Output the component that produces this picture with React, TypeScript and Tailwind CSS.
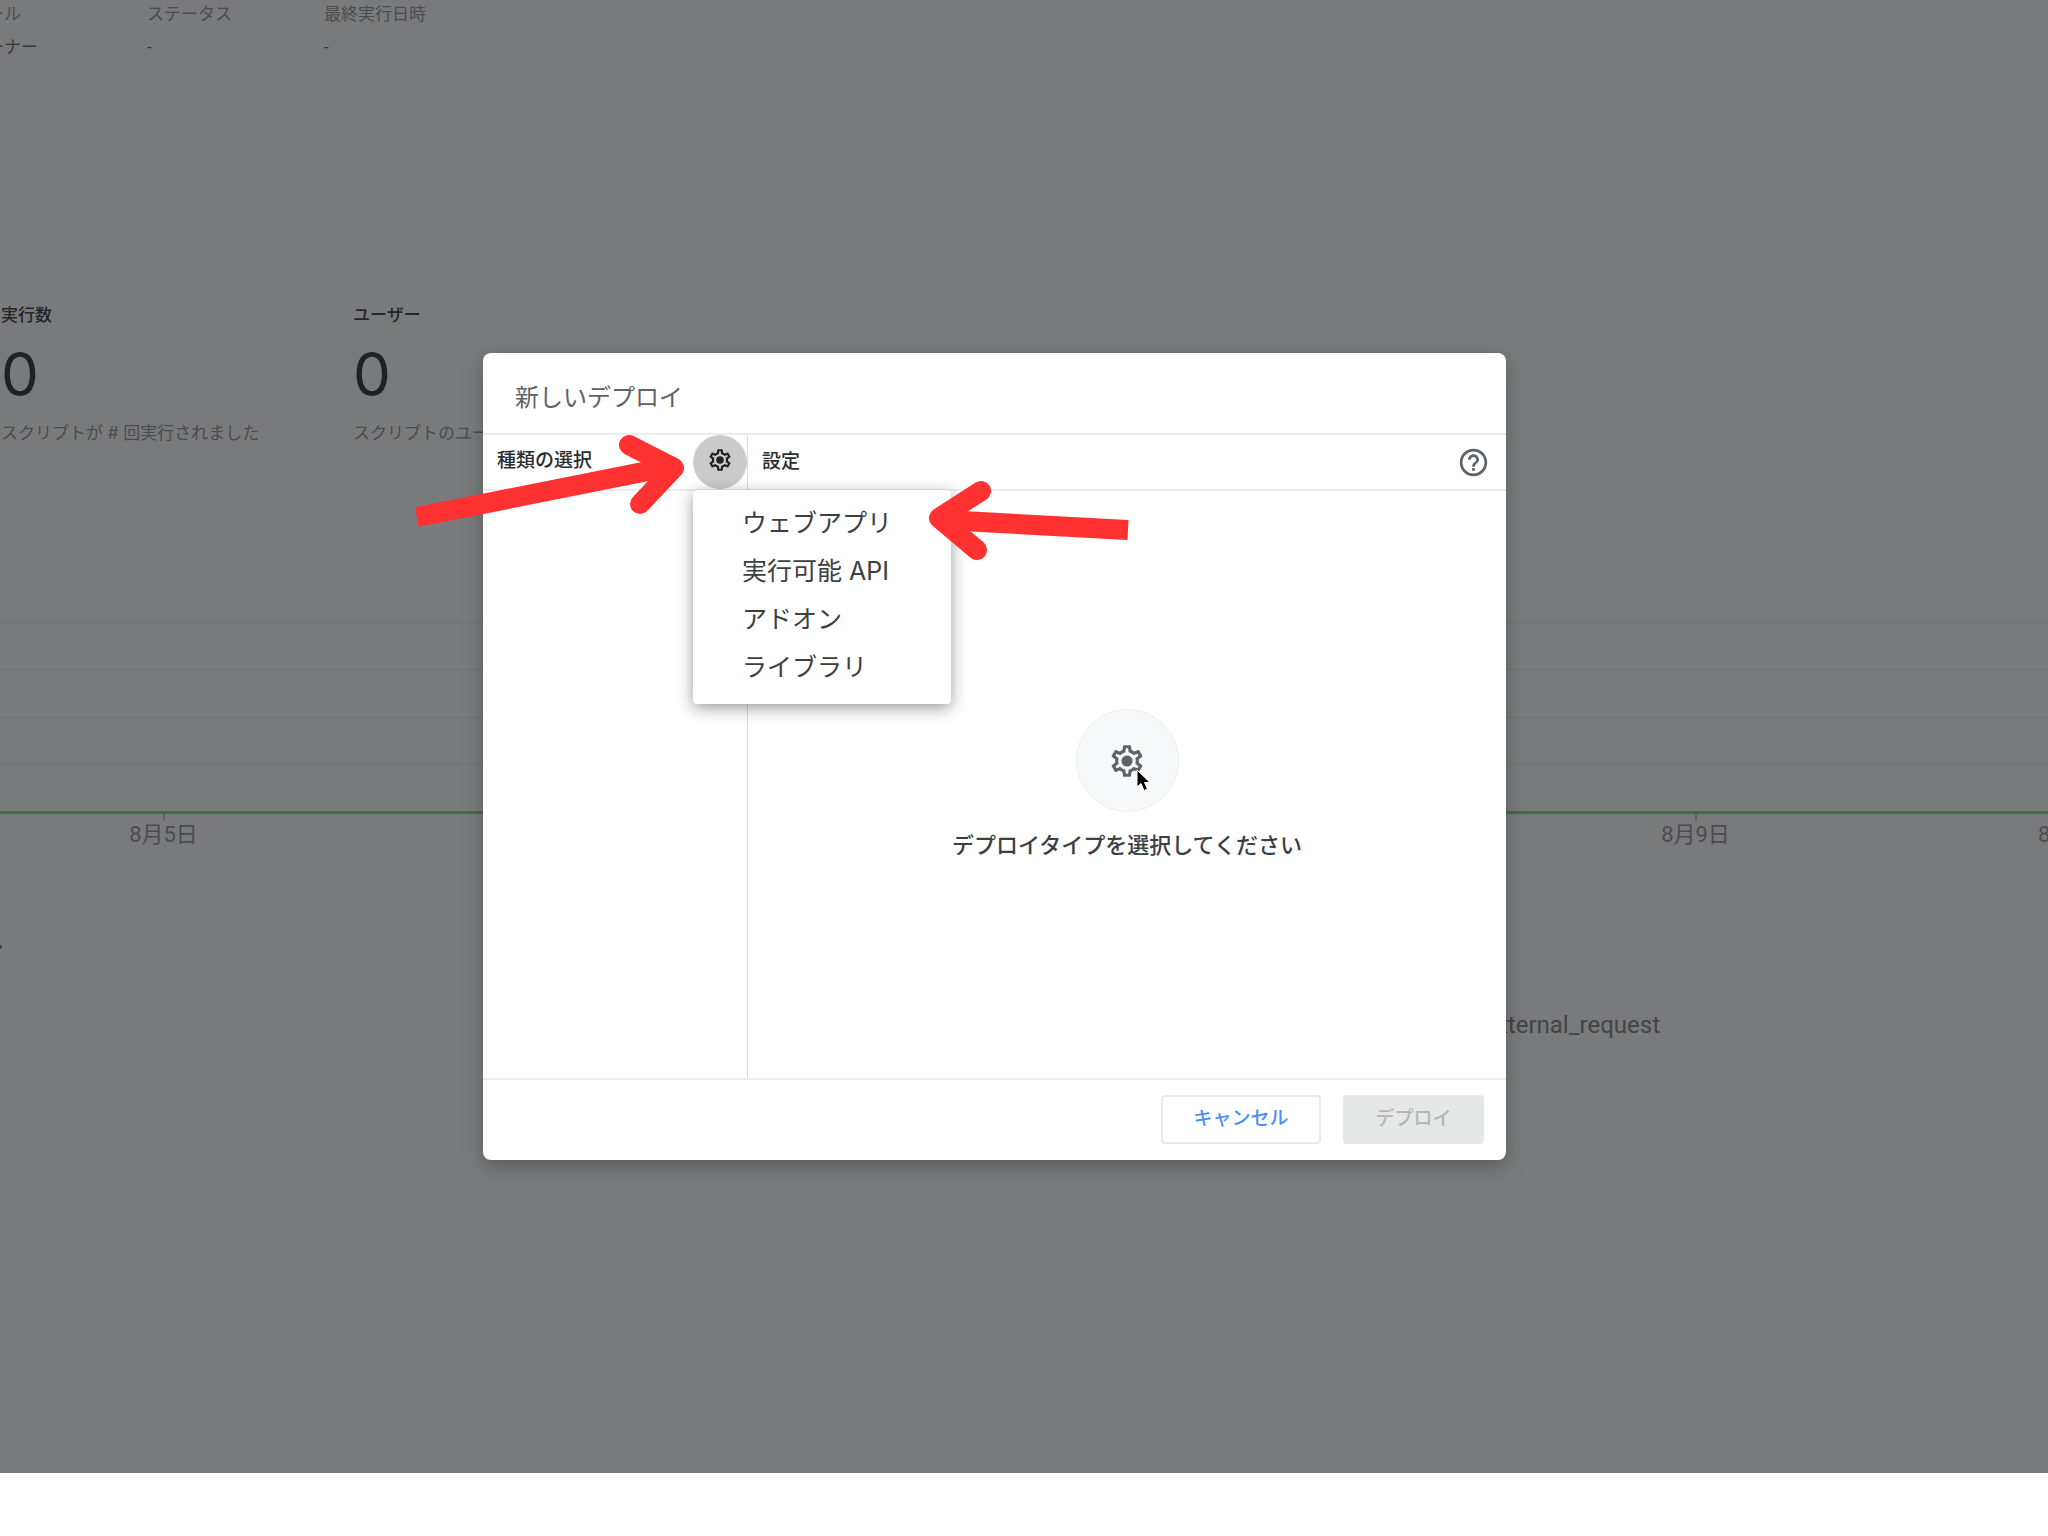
const ticks = ["8月5日", "", "", "", "8月9日", "8月10日"];

const stats = [
  { title: "実行数", value: "0", note: "スクリプトが # 回実行されました" },
  { title: "ユーザー", value: "0", note: "スクリプトのユーザー数" },
];

const details = [
  { term: "ロール", value: "オーナー" },
  { term: "ステータス", value: "-" },
  { term: "最終実行日時", value: "-" },
];

const deployTypes = ["ウェブアプリ", "実行可能 API", "アドオン", "ライブラリ"];

function GearIcon({ className }: { className?: string }) {
  return (
    <svg viewBox="0 0 24 24" className={className} fill="currentColor" aria-hidden="true">
      <path
        fillRule="evenodd"
        d="M19.43 12.98c.04-.32.07-.64.07-.98 0-.34-.03-.66-.07-.98l2.11-1.65c.19-.15.24-.42.12-.64l-2-3.46c-.09-.16-.26-.25-.44-.25-.06 0-.12.01-.17.03l-2.49 1c-.52-.4-1.08-.73-1.69-.98l-.38-2.65C14.46 2.18 14.25 2 14 2h-4c-.25 0-.46.18-.49.42l-.38 2.65c-.61.25-1.17.59-1.69.98l-2.49-1c-.06-.02-.12-.03-.18-.03-.17 0-.34.09-.43.25l-2 3.46c-.13.22-.07.49.12.64l2.11 1.65c-.04.32-.07.65-.07.98 0 .33.03.66.07.98l-2.11 1.65c-.19.15-.24.42-.12.64l2 3.46c.09.16.26.25.44.25.06 0 .12-.01.17-.03l2.49-1c.52.4 1.08.73 1.69.98l.38 2.65c.03.24.24.42.49.42h4c.25 0 .46-.18.49-.42l.38-2.65c.61-.25 1.17-.59 1.69-.98l2.49 1c.06.02.12.03.18.03.17 0 .34-.09.43-.25l2-3.46c.12-.22.07-.49-.12-.64l-2.11-1.65zm-1.98-1.71c.04.31.05.52.05.73 0 .21-.02.43-.05.73l-.14 1.13.89.7 1.08.84-.7 1.21-1.27-.51-1.04-.42-.9.68c-.43.32-.84.56-1.25.73l-1.06.43-.16 1.13-.2 1.35h-1.4l-.19-1.35-.16-1.13-1.06-.43c-.43-.18-.83-.41-1.23-.71l-.91-.7-1.06.43-1.27.51-.7-1.21 1.08-.84.89-.7-.14-1.13c-.03-.31-.05-.54-.05-.74s.02-.43.05-.73l.14-1.13-.89-.7-1.08-.84.7-1.21 1.27.51 1.04.42.9-.68c.43-.32.84-.56 1.25-.73l1.06-.43.16-1.13.2-1.35h1.39l.19 1.35.16 1.13 1.06.43c.43.18.83.41 1.23.71l.91.7 1.06-.43 1.27-.51.7 1.21-1.07.85-.89.7.14 1.13z"
      />
      <circle cx="12" cy="12" r="3.5" />
    </svg>
  );
}

function HelpIcon({ className }: { className?: string }) {
  return (
    <svg viewBox="0 0 24 24" className={className} fill="currentColor" aria-hidden="true">
      <path d="M11 18h2v-2h-2v2zm1-16C6.48 2 2 6.48 2 12s4.48 10 10 10 10-4.48 10-10S17.52 2 12 2zm0 18c-4.41 0-8-3.59-8-8s3.59-8 8-8 8 3.59 8 8-3.59 8-8 8zm0-14c-2.21 0-4 1.79-4 4h2c0-1.1.9-2 2-2s2 .9 2 2c0 2-3 1.75-3 5h2c0-2.25 3-2.5 3-5 0-2.21-1.79-4-4-4z" />
    </svg>
  );
}

function Dashboard() {
  return (
    <main className="text-[17px] leading-6 text-[#4b4c4f]">
      <dl className="-ml-[30px] flex pt-0.5">
        {details.map((d) => (
          <div key={d.term} className="flex w-[177px] flex-col gap-[9px]">
            <dt>{d.term}</dt>
            <dd className="text-[#36373a]">{d.value}</dd>
          </div>
        ))}
      </dl>

      <section className="mt-[244px] flex pl-px">
        {stats.map((s) => (
          <div key={s.title} className="w-[352px]">
            <h2 className="font-medium text-[#242528]">{s.title}</h2>
            <p className="my-[15px] font-[Inter] text-[60px] leading-[64px] text-[#202124]">
              {s.value}
            </p>
            <p className="whitespace-nowrap font-['Inter','Noto_Sans_CJK_JP',sans-serif]">{s.note}</p>
          </div>
        ))}
      </section>

      <section className="mt-[177px]">
        <div className="flex h-[189px] flex-col">
          <div className="flex-1 border-t border-[#717274]" />
          <div className="flex-1 border-t border-[#717274]" />
          <div className="flex-1 border-t border-[#717274]" />
          <div className="flex-1 border-t border-[#717274]" />
        </div>
        <div className="h-[3px] bg-[#476a4b]" />
        <div className="-ml-7 flex">
          {ticks.map((label, i) => (
            <div key={i} className="flex w-[383px] shrink-0 flex-col items-center">
              <div className="h-[7px] w-0.5 bg-[#636467]" />
              <span className="text-[22px] leading-7">{label}</span>
            </div>
          ))}
        </div>
      </section>

      <section className="mt-[96px]">
        <div className="h-1 w-0.5 rounded-r-full bg-[#3f4043]" />
        <p className="mr-[388px] mt-[62px] text-right text-[24px] leading-7 text-[#434447]">
          https://www.googleapis.com/auth/script.external_request
        </p>
      </section>
    </main>
  );
}

function DeployDialog() {
  return (
    <div
      role="dialog"
      aria-labelledby="dialog-title"
      className="flex-1 rounded-lg bg-white text-[#3c4043] shadow-[0_6px_20px_rgba(0,0,0,0.25)]"
    >
      <header className="flex h-20 items-center pl-8 pt-2.5">
        <h1 id="dialog-title" className="text-[24px] leading-8 text-[#5f6368]">
          新しいデプロイ
        </h1>
      </header>

      <div className="flex min-h-[647px] border-y-2 border-[#ebebf0]">
        <div className="flex w-[265px] flex-col border-r border-[#dadce0]">
          <div className="flex h-14 items-start justify-between border-b-2 border-[#ebebf0] pl-3.5">
            <h2 className="pt-3 text-[19px] leading-7 font-medium text-[#2b2c30]">種類の選択</h2>
            <div className="relative">
              <button
                type="button"
                aria-label="デプロイタイプを有効にする"
                className="flex size-[54px] items-center justify-center rounded-full bg-[#cbcbcb] pb-1 text-[#202124]"
              >
                <GearIcon className="size-[26px]" />
              </button>
              <ul
                role="menu"
                className="absolute left-0 top-[55px] w-[258px] rounded bg-white pt-[9px] pb-[13px] font-['Inter','Noto_Sans_CJK_JP',sans-serif] shadow-[0_4px_16px_rgba(0,0,0,0.4)]"
              >
                {deployTypes.map((t) => (
                  <li key={t} role="none">
                    <button
                      type="button"
                      role="menuitem"
                      className="h-12 w-full pl-[49px] text-left text-[25px] leading-8"
                    >
                      {t}
                    </button>
                  </li>
                ))}
              </ul>
            </div>
          </div>
        </div>

        <div className="flex flex-1 flex-col">
          <div className="flex h-14 items-center justify-between border-b-2 border-[#ebebf0] pl-3.5 pr-4">
            <h2 className="text-[19px] leading-7 font-medium text-[#2b2c30]">設定</h2>
            <button type="button" aria-label="ヘルプ" className="text-[#5f6368]">
              <HelpIcon className="size-[33px]" />
            </button>
          </div>
          <div className="flex flex-1 flex-col items-center pt-[218px]">
            <div className="relative flex size-[103px] items-center justify-center rounded-full border border-[#eeeff0] bg-[#f8f9fb] text-[#5f6368]">
              <GearIcon className="size-[38px]" />
              <svg
                viewBox="0 0 16 24"
                className="absolute left-[59px] top-[59px] h-6 w-4"
                aria-hidden="true"
              >
                <path
                  d="M1 1v17l4-3.5 3 7 3.5-1.500-3-6.500h5.500z"
                  fill="#000"
                  stroke="#fff"
                  strokeWidth="1"
                />
              </svg>
            </div>
            <p className="mt-[18px] text-[22px] leading-8 font-medium">
              デプロイタイプを選択してください
            </p>
          </div>
        </div>
      </div>

      <footer className="flex justify-end gap-[22px] px-[22px] pt-[15px] pb-4 text-[19px] font-medium">
        <button
          type="button"
          className="h-[49px] w-40 rounded border-2 border-[#e8eaed] text-[#4a90f5]"
        >
          キャンセル
        </button>
        <button type="button" disabled className="h-[49px] w-[141px] rounded bg-[#e6e8e7] text-[#b4b6b6]">
          デプロイ
        </button>
      </footer>
    </div>
  );
}

function Arrows() {
  return (
    <svg
      className="pointer-events-none absolute left-0 top-0"
      width="1200"
      height="600"
      fill="none"
      stroke="#ff3131"
      strokeWidth="20"
      strokeLinejoin="round"
      aria-hidden="true"
    >
      <path d="M417 517L673 466" />
      <path d="M629 445L674 468L640 504" strokeLinecap="round" />
      <path d="M1128 530L944 520" />
      <path d="M981 491L939 518L977 550" strokeLinecap="round" />
    </svg>
  );
}

export default function App() {
  return (
    <div className="min-h-screen bg-white font-['Roboto','Noto_Sans_CJK_JP',sans-serif]">
      <div className="relative min-h-[1473px] overflow-hidden bg-[#797a7c]">
        <Dashboard />
        <div className="absolute inset-0 flex items-start pl-[483px] pr-[542px] pt-[353px]">
          <DeployDialog />
        </div>
        <Arrows />
      </div>
    </div>
  );
}
